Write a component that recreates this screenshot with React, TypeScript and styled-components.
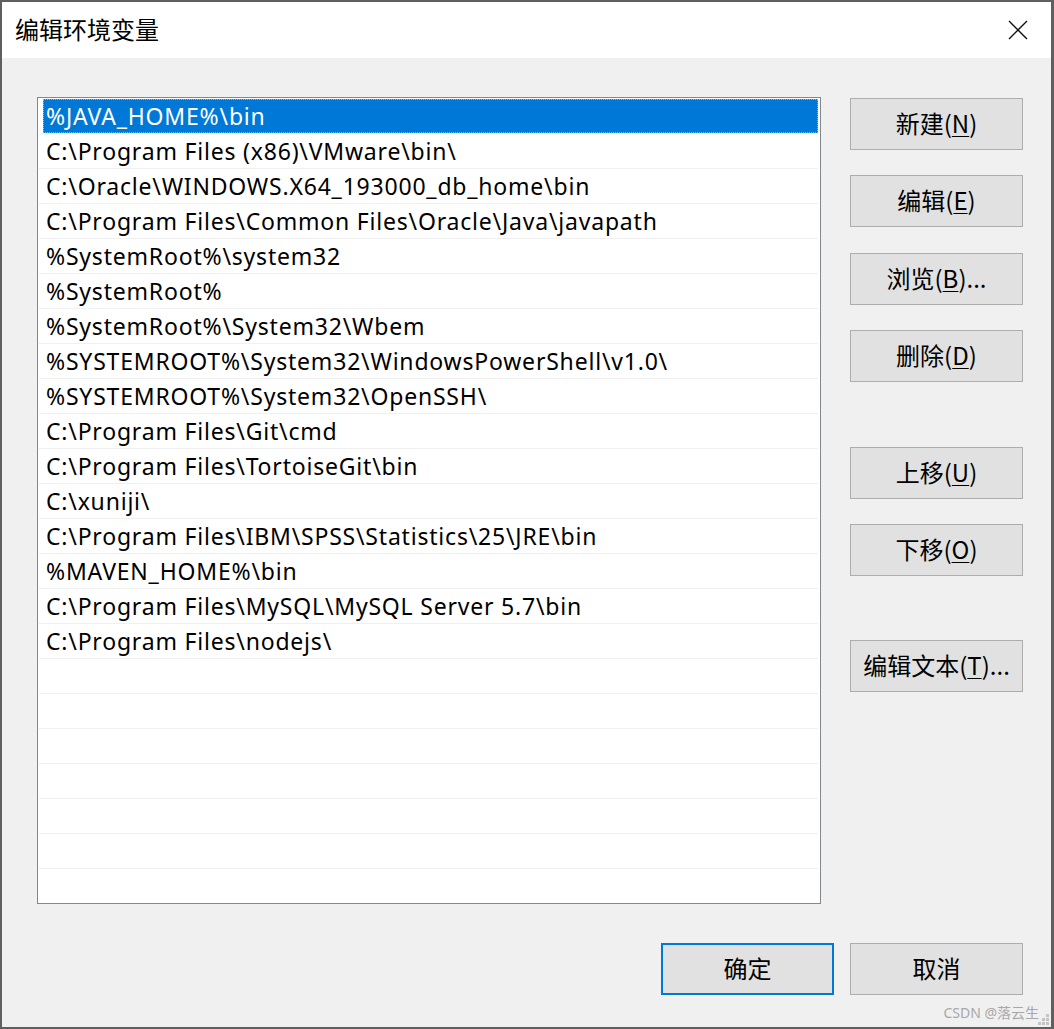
import React from 'react';
import styled, { createGlobalStyle } from 'styled-components';

const GlobalStyle = createGlobalStyle`
  html, body {
    margin: 0;
    padding: 0;
    background: #ffffff;
  }
  body {
    font-family: 'Noto Sans', 'Noto Sans CJK SC', sans-serif;
  }
`;

const paths = [
  '%JAVA_HOME%\\bin',
  'C:\\Program Files (x86)\\VMware\\bin\\',
  'C:\\Oracle\\WINDOWS.X64_193000_db_home\\bin',
  'C:\\Program Files\\Common Files\\Oracle\\Java\\javapath',
  '%SystemRoot%\\system32',
  '%SystemRoot%',
  '%SystemRoot%\\System32\\Wbem',
  '%SYSTEMROOT%\\System32\\WindowsPowerShell\\v1.0\\',
  '%SYSTEMROOT%\\System32\\OpenSSH\\',
  'C:\\Program Files\\Git\\cmd',
  'C:\\Program Files\\TortoiseGit\\bin',
  'C:\\xuniji\\',
  'C:\\Program Files\\IBM\\SPSS\\Statistics\\25\\JRE\\bin',
  '%MAVEN_HOME%\\bin',
  'C:\\Program Files\\MySQL\\MySQL Server 5.7\\bin',
  'C:\\Program Files\\nodejs\\',
];

const EMPTY_ROWS = 8;

const Window = styled.div`
  position: relative;
  box-sizing: border-box;
  width: 1054px;
  height: 1029px;
  border: 2px solid #5f5f5f;
  border-right-width: 3px;
  border-bottom-width: 2px;
  background: #f0f0f0;
  display: flex;
  flex-direction: column;
  overflow: hidden;
`;

const TitleBar = styled.div`
  height: 56px;
  background: #ffffff;
  display: flex;
  align-items: center;
  justify-content: space-between;
  padding-left: 13px;
`;

const Title = styled.span`
  font-family: 'Noto Sans CJK SC', sans-serif;
  font-size: 24px;
  color: #000000;
  margin-top: -3px;
`;

const CloseButton = styled.div`
  width: 56px;
  height: 56px;
  margin-right: 5px;
  display: flex;
  align-items: center;
  justify-content: center;
`;

const Body = styled.div`
  flex: 1;
  display: flex;
  flex-direction: column;
  padding: 39px 28px 0 35px;
`;

const Main = styled.div`
  display: flex;
  gap: 29px;
`;

const List = styled.div`
  box-sizing: border-box;
  width: 785px;
  height: 807px;
  border: 1px solid #828790;
  background: #ffffff;
  padding: 1px 2px 0 1px;
  overflow: hidden;
`;

const Row = styled.div`
  box-sizing: border-box;
  height: 35px;
  border-bottom: 1px solid #f0f0f0;
  display: flex;
  padding-left: 4px;
`;

const RowText = styled.div<{ $selected?: boolean }>`
  box-sizing: border-box;
  flex: 1;
  height: 34px;
  display: flex;
  align-items: center;
  padding-left: 2px;
  font-family: 'Noto Sans', 'Noto Sans CJK SC', sans-serif;
  font-size: 23px;
  letter-spacing: 0.8px;
  color: ${(p) => (p.$selected ? '#ffffff' : '#000000')};
  background: ${(p) => (p.$selected ? '#0078d7' : 'transparent')};
  border: 1px ${(p) => (p.$selected ? 'dotted #f3a33a' : 'solid transparent')};
  white-space: nowrap;
`;

const ButtonColumn = styled.div`
  display: flex;
  flex-direction: column;
  padding-top: 1px;
`;

const Button = styled.div<{ $gap?: number; $default?: boolean }>`
  box-sizing: border-box;
  width: 173px;
  height: 52px;
  margin-top: ${(p) => p.$gap ?? 0}px;
  background: #e1e1e1;
  border: ${(p) => (p.$default ? '2px solid #0078d7' : '1px solid #adadad')};
  display: flex;
  align-items: center;
  justify-content: center;
  padding-bottom: 3px;
  font-family: 'Noto Sans CJK SC', sans-serif;
  font-size: 24px;
  color: #000000;
`;

const Key = styled.span`
  text-decoration: underline;
  text-underline-offset: 3px;
  text-decoration-thickness: 1px;
`;

const Footer = styled.div`
  display: flex;
  justify-content: flex-end;
  gap: 16px;
  margin-top: 39px;
`;

const Watermark = styled.div`
  position: absolute;
  right: 12px;
  bottom: 5px;
  font-family: 'Noto Sans', 'Noto Sans CJK SC', sans-serif;
  font-size: 14px;
  color: #a8a8a8;
  display: flex;
  align-items: center;
`;

const Grip = styled.svg`
  position: absolute;
  right: 1px;
  bottom: 1px;
`;

const Label = ({ text, k, suffix = '' }: { text: string; k: string; suffix?: string }) => (
  <span>
    {text}(<Key>{k}</Key>){suffix}
  </span>
);

export default function App() {
  const sideButtons = [
    { text: '新建', k: 'N', gap: 0 },
    { text: '编辑', k: 'E', gap: 25 },
    { text: '浏览', k: 'B', gap: 26, suffix: '...' },
    { text: '删除', k: 'D', gap: 25 },
    { text: '上移', k: 'U', gap: 65 },
    { text: '下移', k: 'O', gap: 25 },
    { text: '编辑文本', k: 'T', gap: 64, suffix: '...' },
  ];

  return (
    <>
      <GlobalStyle />
      <Window>
        <TitleBar>
          <Title>编辑环境变量</Title>
          <CloseButton>
            <svg width="20" height="20" viewBox="0 0 20 20">
              <path d="M1 1 L19 19 M19 1 L1 19" stroke="#111" strokeWidth="1.4" fill="none" />
            </svg>
          </CloseButton>
        </TitleBar>
        <Body>
          <Main>
            <List>
              {paths.map((p, i) => (
                <Row key={p}>
                  <RowText $selected={i === 0}>{p}</RowText>
                </Row>
              ))}
              {Array.from({ length: EMPTY_ROWS }).map((_, i) => (
                <Row key={`empty-${i}`}>
                  <RowText />
                </Row>
              ))}
            </List>
            <ButtonColumn>
              {sideButtons.map((b) => (
                <Button key={b.text} $gap={b.gap}>
                  <Label text={b.text} k={b.k} suffix={b.suffix} />
                </Button>
              ))}
            </ButtonColumn>
          </Main>
          <Footer>
            <Button $default>确定</Button>
            <Button>取消</Button>
          </Footer>
        </Body>
        <Watermark>CSDN @落云生</Watermark>
        <Grip width="14" height="14" viewBox="0 0 14 14">
          <g fill="#c4c4c4">
            <rect x="10" y="2" width="3" height="3" />
            <rect x="6" y="6" width="3" height="3" />
            <rect x="10" y="6" width="3" height="3" />
            <rect x="2" y="10" width="3" height="3" />
            <rect x="6" y="10" width="3" height="3" />
            <rect x="10" y="10" width="3" height="3" />
          </g>
        </Grip>
      </Window>
    </>
  );
}
